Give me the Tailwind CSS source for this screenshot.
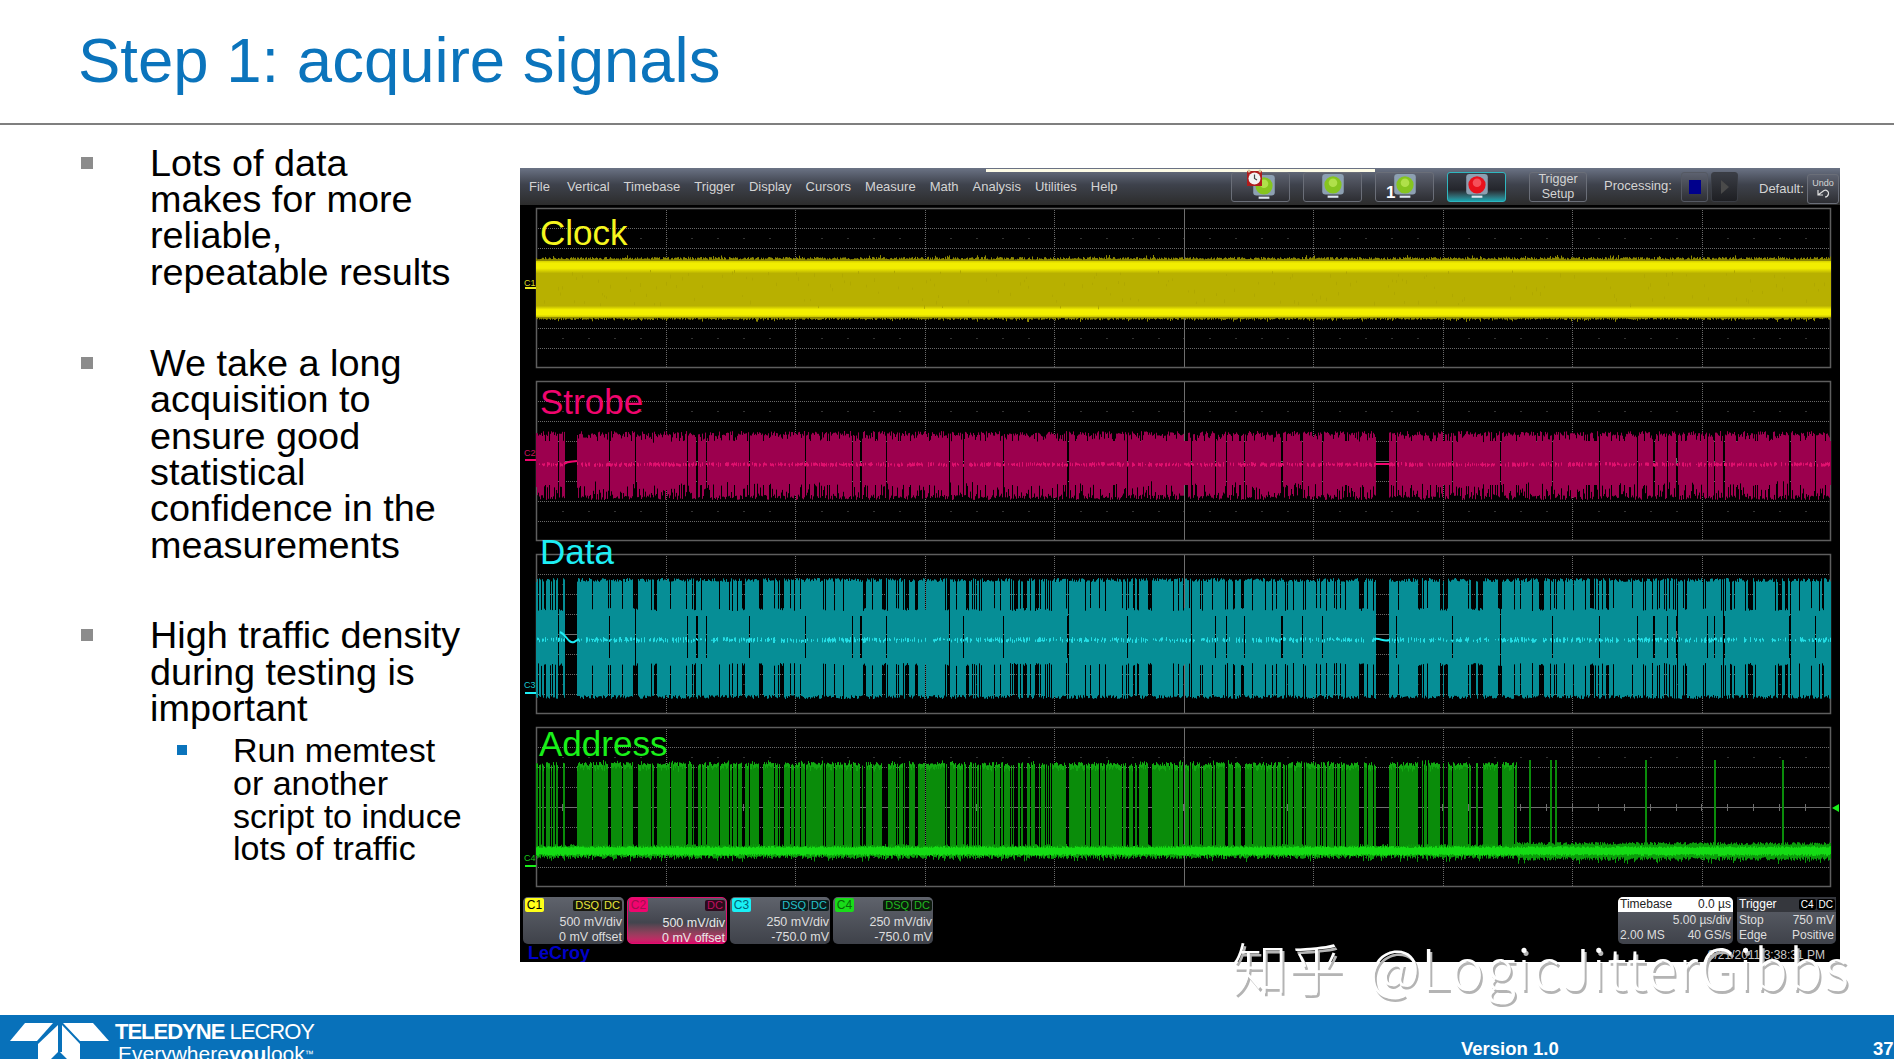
<!DOCTYPE html>
<html lang="en">
<head>
<meta charset="UTF-8">
<title>Step 1: acquire signals</title>
<script src="https://cdn.jsdelivr.net/npm/@tailwindcss/browser@4"></script>
</head>
<body class="bg-white font-['Liberation_Sans',Arial,sans-serif]">
<div class="relative flex flex-col w-[1894px] h-[1059px] overflow-hidden">

  <!-- Title -->
  <div class="h-[123px] pl-[78px] pt-[29px] shrink-0">
    <h1 class="text-[63.5px] leading-none text-[#0b74bc]">Step 1: acquire signals</h1>
  </div>
  <div class="h-[2px] bg-[#7f7f7f] shrink-0"></div>

  <div class="flex h-[890px] shrink-0">
    <!-- Bullets -->
    <div class="w-[520px] pl-[81px] pt-[20px] shrink-0 text-black">
      <div class="flex text-[37.8px] leading-[36.2px]">
        <span class="w-[12px] h-[12px] mt-[12px] mr-[57px] bg-[#8c8c8c] shrink-0"></span>
        <p>Lots of data<br>makes for more<br>reliable,<br>repeatable results</p>
      </div>
      <div class="flex text-[37.8px] leading-[36.4px] mt-[55px]">
        <span class="w-[12px] h-[12px] mt-[12px] mr-[57px] bg-[#8c8c8c] shrink-0"></span>
        <p>We take a long<br>acquisition to<br>ensure good<br>statistical<br>confidence in the<br>measurements</p>
      </div>
      <div class="flex text-[37.8px] leading-[36.4px] mt-[54px]">
        <span class="w-[12px] h-[12px] mt-[12px] mr-[57px] bg-[#8c8c8c] shrink-0"></span>
        <p>High traffic density<br>during testing is<br>important</p>
      </div>
      <div class="flex text-[34px] leading-[32.6px] mt-[8px] ml-[96px]">
        <span class="w-[10px] h-[10px] mt-[11px] mr-[46px] bg-[#0b74bc] shrink-0"></span>
        <p>Run memtest<br>or another<br>script to induce<br>lots of traffic</p>
      </div>
    </div>

    <!-- Scope capture -->
    <div class="relative w-[1320px] h-[794px] mt-[43px] bg-black shrink-0 overflow-hidden">
      <!-- Menu bar -->
      <div class="relative flex items-center h-[37px] bg-linear-to-b from-[#6b7385] via-[#3e424c] via-45% to-[#2c2c2c] text-[#d4d4d4]">
        <div class="absolute left-[466px] top-[1px] w-[389px] h-[3px] bg-[#fdfbe6]"></div>
        <nav class="flex gap-[14px] pl-[9px] text-[13px] w-[711px] shrink-0">
          <span class="mr-[3px]">File</span><span>Vertical</span><span>Timebase</span><span>Trigger</span><span>Display</span><span>Cursors</span><span>Measure</span><span>Math</span><span>Analysis</span><span>Utilities</span><span>Help</span>
        </nav>
        <div class="flex gap-[13px]">
          <div class="relative flex items-center justify-center w-[59px] h-[30px] rounded-[3px] border border-[#6a6e78] bg-linear-to-b from-[#5d6270] to-[#2d2e33]">
            <svg class="w-[26px] h-[28px] mt-[2px] ml-[6px]" viewBox="0 0 24 26"><rect x="2" y="1" width="20" height="19" rx="3" fill="#8da0b2"/><circle cx="12" cy="11" r="8" fill="#86c51f"/><circle cx="12" cy="9" r="4" fill="#b0e04a"/><rect x="7" y="21" width="10" height="2" fill="#dfe8f2"/></svg>
            <svg class="absolute left-[14px] -top-[4px] w-[17px] h-[19px]" viewBox="0 0 17 19"><rect x="1" y="2" width="15" height="15" fill="#b01d1d"/><circle cx="8.5" cy="9.5" r="6" fill="#f2f2f2"/><path d="M8.5 5.500V9.500L11 11" stroke="#444" stroke-width="1.2" fill="none"/><circle cx="3" cy="2" r="1.500" fill="#d8c9a0"/><circle cx="14" cy="2" r="1.500" fill="#d8c9a0"/></svg>
          </div>
          <div class="flex items-center justify-center w-[59px] h-[30px] rounded-[3px] border border-[#6a6e78] bg-linear-to-b from-[#5d6270] to-[#2d2e33]">
            <svg class="w-[26px] h-[28px]" viewBox="0 0 24 26"><rect x="2" y="1" width="20" height="19" rx="3" fill="#8da0b2"/><circle cx="12" cy="11" r="8" fill="#86c51f"/><circle cx="12" cy="9" r="4" fill="#b0e04a"/><rect x="7" y="21" width="10" height="2" fill="#dfe8f2"/></svg>
          </div>
          <div class="relative flex items-center justify-center w-[59px] h-[30px] rounded-[3px] border border-[#6a6e78] bg-linear-to-b from-[#5d6270] to-[#2d2e33]">
            <span class="absolute left-[10px] bottom-[0px] text-[17px] leading-none font-bold text-white">1</span>
            <svg class="w-[26px] h-[28px]" viewBox="0 0 24 26"><rect x="2" y="1" width="20" height="19" rx="3" fill="#8da0b2"/><circle cx="12" cy="11" r="8" fill="#86c51f"/><circle cx="12" cy="9" r="4" fill="#b0e04a"/><rect x="7" y="21" width="10" height="2" fill="#dfe8f2"/></svg>
          </div>
          <div class="flex items-center justify-center w-[59px] h-[30px] rounded-[3px] border border-[#2fb7c0] bg-linear-to-b from-[#3a3e48] via-[#24262c] via-60% to-[#16a3ae]">
            <svg class="w-[26px] h-[28px]" viewBox="0 0 24 26"><rect x="2" y="1" width="20" height="19" rx="3" fill="#8da0b2"/><circle cx="12" cy="11" r="8" fill="#e8111c"/><circle cx="12" cy="9" r="4" fill="#f5505a"/><rect x="7" y="21" width="10" height="2" fill="#dfe8f2"/></svg>
          </div>
        </div>
        <div class="flex items-center justify-center w-[58px] h-[30px] ml-[23px] rounded-[3px] border border-[#6a6e78] bg-linear-to-b from-[#5d6270] to-[#2d2e33] text-[12.5px] leading-[15px] text-center">Trigger<br>Setup</div>
        <span class="ml-[17px] w-[69px] text-[13px] mb-[2px] whitespace-nowrap">Processing:</span>
        <div class="flex items-center justify-center w-[27px] h-[30px] ml-[8px] rounded-[3px] border border-[#555963] bg-linear-to-b from-[#5d6270] to-[#2d2e33]"><div class="w-[12px] h-[14px] bg-[#00008c]"></div></div>
        <div class="flex items-center justify-center w-[27px] h-[30px] ml-[3px] rounded-[3px] border border-[#3a3d44] bg-linear-to-b from-[#3b3e46] to-[#1e1f23]">
          <svg class="w-[10px] h-[14px]" viewBox="0 0 10 14"><path d="M1 0L9 7L1 14Z" fill="#4a4a4a"/></svg>
        </div>
        <span class="ml-[21px] text-[13px] mt-[5px] w-[46px] whitespace-nowrap">Default:</span>
        <div class="flex flex-col items-center w-[32px] h-[30px] ml-[2px] mt-[5px] rounded-[3px] border border-[#6a6e78] bg-linear-to-b from-[#5d6270] to-[#2d2e33] text-[9px] leading-[12px] pt-[2px]">Undo
          <svg class="w-[14px] h-[9px]" viewBox="0 0 14 9"><path d="M2 1V6H7M2 6L8 1.500C10.500 0.500 13 2.500 12.500 5C12 7 10.500 8 9 8" stroke="#e0e0e0" stroke-width="1.2" fill="none"/></svg>
        </div>
      </div>

      <!-- Plots -->
      <div class="flex flex-col gap-[13px] pl-[16px] pt-[3px]">
        <div class="relative w-[1295px] h-[160px]">
          <svg id="plot1" class="block overflow-visible" width="1295" height="160"></svg>
          <span class="absolute left-[4px] top-[7px] text-[35px] leading-none text-[#f5f51e]">Clock</span>
          <span class="absolute -left-[12px] top-[71px] text-[9px] leading-none text-[#d8d820]">C1</span>
          <div class="absolute -left-[11px] top-[79px] w-[11px] h-[2px] bg-[#e8e820]"></div>
        </div>
        <div class="relative w-[1295px] h-[160px]">
          <svg id="plot2" class="block overflow-visible" width="1295" height="160"></svg>
          <span class="absolute left-[4px] top-[3px] text-[35px] leading-none text-[#f0056e]">Strobe</span>
          <span class="absolute -left-[12px] top-[68px] text-[9px] leading-none text-[#d01060]">C2</span>
          <div class="absolute -left-[11px] top-[78px] w-[11px] h-[2px] bg-[#f0056e]"></div>
        </div>
        <div class="relative w-[1295px] h-[160px]">
          <svg id="plot3" class="block overflow-visible" width="1295" height="160"></svg>
          <span class="absolute left-[4px] -top-[20px] text-[35px] leading-none text-[#1eeef5]">Data</span>
          <span class="absolute -left-[12px] top-[127px] text-[9px] leading-none text-[#19c8d0]">C3</span>
          <div class="absolute -left-[11px] top-[138px] w-[11px] h-[2px] bg-[#1eeef5]"></div>
        </div>
        <div class="relative w-[1295px] h-[160px]">
          <svg id="plot4" class="block overflow-visible" width="1295" height="160"></svg>
          <span class="absolute left-[3px] -top-[1px] text-[35px] leading-none text-[#19f019]">Address</span>
          <span class="absolute -left-[12px] top-[127px] text-[9px] leading-none text-[#19c819]">C4</span>
          <div class="absolute -left-[11px] top-[138px] w-[11px] h-[2px] bg-[#19f019]"></div>
        </div>
      </div>

      <!-- Channel and timebase readouts -->
      <div class="flex mt-[10px] pl-[3px] pr-[4px]">
        <div class="w-[101px] h-[47px] rounded-[5px] bg-linear-to-b from-[#5f636c] to-[#3f424a] text-[#dedede] text-[12.5px] leading-[15px] text-right pr-[2px]">
          <div class="flex items-start justify-between h-[18px] pt-[1px] pl-[2px]"><span class="w-[19px] h-[14px] rounded-[2px] bg-[#ffff19] text-black text-[12px] leading-[14px] text-center">C1</span><span class="flex gap-[1px] text-[11px] leading-[11px] mt-[2px]"><span class="px-[2px] rounded-[2px] bg-[#15150c] text-[#e5e53c]">DSQ</span><span class="px-[2px] rounded-[2px] bg-[#15150c] text-[#e5e53c]">DC</span></span></div>
          <div>500 mV/div</div><div>0 mV offset</div>
        </div>
        <div class="w-[100px] h-[47px] ml-[3px] rounded-[5px] border border-[#e0106f] bg-linear-to-b from-[#5a5e68] via-[#43454e] via-55% to-[#d9046a] text-[#e8e8e8] text-[12.5px] leading-[15px] text-right pr-[1px]">
          <div class="flex items-start justify-between h-[18px] pl-[1px]"><span class="w-[19px] h-[14px] rounded-[2px] bg-[#f0056e] text-[#a0104e] text-[12px] leading-[14px] text-center">C2</span><span class="text-[11px] leading-[11px] mt-[2px] px-[2px] rounded-[2px] bg-[#2c0a1c] text-[#c01060]">DC</span></div>
          <div>500 mV/div</div><div>0 mV offset</div>
        </div>
        <div class="w-[100px] h-[47px] ml-[3px] rounded-[5px] bg-linear-to-b from-[#5f636c] to-[#3f424a] text-[#dedede] text-[12.5px] leading-[15px] text-right pr-[1px]">
          <div class="flex items-start justify-between h-[18px] pt-[1px] pl-[2px]"><span class="w-[19px] h-[14px] rounded-[2px] bg-[#19f0f5] text-[#067] text-[12px] leading-[14px] text-center">C3</span><span class="flex gap-[1px] text-[11px] leading-[11px] mt-[2px]"><span class="px-[2px] rounded-[2px] bg-[#0b1a1c] text-[#26c0c8]">DSQ</span><span class="px-[2px] rounded-[2px] bg-[#0b1a1c] text-[#26c0c8]">DC</span></span></div>
          <div>250 mV/div</div><div>-750.0 mV</div>
        </div>
        <div class="w-[100px] h-[47px] ml-[3px] rounded-[5px] bg-linear-to-b from-[#5f636c] to-[#3f424a] text-[#dedede] text-[12.5px] leading-[15px] text-right pr-[1px]">
          <div class="flex items-start justify-between h-[18px] pt-[1px] pl-[2px]"><span class="w-[19px] h-[14px] rounded-[2px] bg-[#19dc19] text-[#076a07] text-[12px] leading-[14px] text-center">C4</span><span class="flex gap-[1px] text-[11px] leading-[11px] mt-[2px]"><span class="px-[2px] rounded-[2px] bg-[#0c1a0c] text-[#20b820]">DSQ</span><span class="px-[2px] rounded-[2px] bg-[#0c1a0c] text-[#20b820]">DC</span></span></div>
          <div>250 mV/div</div><div>-750.0 mV</div>
        </div>

        <div class="w-[115px] h-[47px] ml-auto rounded-[5px] overflow-hidden bg-linear-to-b from-[#5f636c] to-[#3f424a] text-[#dedede] text-[12px] leading-[15px]">
          <div class="flex justify-between h-[15px] px-[2px] bg-white text-[#222]"><span>Timebase</span><span>0.0 µs</span></div>
          <div class="text-right pr-[2px] mt-[1px]">5.00 µs/div</div>
          <div class="flex justify-between px-[2px]"><span>2.00 MS</span><span>40 GS/s</span></div>
        </div>
        <div class="w-[99px] h-[47px] ml-[4px] rounded-[5px] bg-linear-to-b from-[#5f636c] to-[#3f424a] text-[#dedede] text-[12px] leading-[15px]">
          <div class="flex justify-between items-center h-[15px] pl-[2px] pr-[1px] bg-[#35373d] text-white"><span>Trigger</span><span class="flex gap-[1px] text-[10px] leading-[11px]"><span class="px-[2px] rounded-[2px] bg-black">C4</span><span class="px-[2px] rounded-[2px] bg-black">DC</span></span></div>
          <div class="flex justify-between px-[2px] mt-[1px]"><span>Stop</span><span>750 mV</span></div>
          <div class="flex justify-between px-[2px]"><span>Edge</span><span>Positive</span></div>
        </div>
      </div>
      <div class="flex justify-between h-[18px] pl-[8px] pr-[15px]">
        <span class="text-[18px] leading-[18px] font-bold text-[#0000c8]">LeCroy</span>
        <span class="text-[12px] leading-[22px] text-[#c8c8c8]">8/21/2011 3:38:31 PM</span>
      </div>
    </div>
  </div>

  <!-- Footer -->
  <footer class="relative flex h-[44px] bg-[#0871ba] shrink-0 overflow-hidden text-white">
    <svg class="absolute left-0 top-0" width="112" height="44" viewBox="0 15 112 44">
      <path d="M25 23H53L37 41H10Z" fill="#fff"/>
      <path d="M63 23H93L109 41H80Z" fill="#fff"/>
      <path d="M58 25V52L50 60H38V44Z" fill="#fff"/>
      <path d="M62 25L80 44V60H68L60 52H62Z" fill="#fff"/>
    </svg>
    <div class="ml-[115px] pt-[5px] w-[300px] shrink-0">
      <div class="text-[22px] leading-[24px] tracking-[-1px] whitespace-nowrap"><b>TELEDYNE</b> LECROY</div>
      <div class="text-[21px] leading-[24px] ml-[3px] -mt-[2px] whitespace-nowrap">Everywhere<b>you</b>look<sup class="text-[9px]">™</sup></div>
    </div>
    <span class="absolute left-[1461px] top-[23px] text-[18.5px] leading-[22px] font-bold whitespace-nowrap">Version 1.0</span>
    <span class="absolute left-[1873px] top-[23px] text-[18.5px] leading-[22px] font-bold">37</span>
  </footer>

  <!-- Watermark -->
  <div class="absolute left-[1232px] top-[928px] flex items-baseline gap-[25px] text-[56px] leading-[76px] font-light text-white whitespace-nowrap [text-shadow:2px_3px_0_#b4b4b4] font-['Noto_Sans_CJK_SC','Noto_Sans',sans-serif]">
    <span>知乎</span><span class="tracking-[1.15px]">@LogicJitterGibbs</span>
  </div>
</div>

<script>
// small seeded generator so the traces come out the same every load
let seed = 20110821;
function rnd() {
  seed = (seed * 1664525 + 1013904223) >>> 0;
  return seed / 4294967296;
}

const W = 1295, H = 160, DIVX = W / 10, DIVY = H / 8;

function dead(x) { return (x > 28 && x < 41) || (x > 839 && x < 853); }

// shared burst pattern, every channel sees the same bus traffic
const active = [], dense = [], thin = [];
for (let x = 0; x < W;) {
  const on = 2 + Math.floor(rnd() * rnd() * 34);
  const off = 1 + Math.floor(rnd() * rnd() * 5);
  for (let i = 0; i < on; i++) active[x++] = true;
  for (let i = 0; i < off; i++) active[x++] = false;
}
for (let x = 0; x < W;) {
  const on = 6 + Math.floor(rnd() * 60);
  const off = rnd() < 0.7 ? 1 : 2;
  for (let i = 0; i < on; i++) dense[x++] = true;
  for (let i = 0; i < off; i++) dense[x++] = false;
}
for (let x = 0; x < W;) {
  const on = 1 + Math.floor(rnd() * rnd() * 22);
  const off = rnd() < 0.8 ? 1 : 2 + Math.floor(rnd() * 4);
  for (let i = 0; i < on; i++) thin[x++] = true;
  for (let i = 0; i < off; i++) thin[x++] = false;
}

function line(x, a, b) { return `M${x + 0.5} ${a.toFixed(1)}V${b.toFixed(1)}`; }
function stroke(d, color, w, extra) {
  return `<path d="${d}" stroke="${color}" stroke-width="${w || 1}" fill="none" ${extra || ''}/>`;
}

function grid(color, triX) {
  let s = '';
  for (let i = 1; i < 8; i++) {
    const y = Math.round(i * DIVY) + 0.5;
    if (i === 4) continue;
    s += `<line x1="0" x2="${W}" y1="${y}" y2="${y}" stroke="#6a6a6a" stroke-dasharray="1 1"/>`;
  }
  for (let i = 1; i < 10; i++) {
    const x = Math.round(i * DIVX) + 0.5;
    if (i === 5) continue;
    s += `<line x1="${x}" x2="${x}" y1="0" y2="${H}" stroke="#6a6a6a" stroke-dasharray="1 1"/>`;
  }
  s += `<line x1="0" x2="${W}" y1="80.5" y2="80.5" stroke="#6e6e6e"/>`;
  s += `<line x1="${Math.round(5 * DIVX) + 0.5}" x2="${Math.round(5 * DIVX) + 0.5}" y1="0" y2="${H}" stroke="#6e6e6e"/>`;
  for (let x = DIVX / 5; x < W; x += DIVX / 5) {
    const tx = Math.round(x) + 0.5;
    s += `<line x1="${tx}" x2="${tx}" y1="77" y2="84" stroke="#6e6e6e"/>`;
    s += `<rect x="${tx}" y="30" width="1" height="1" fill="#666"/><rect x="${tx}" y="130" width="1" height="1" fill="#666"/>`;
  }
  s += `<rect x="0.5" y="0.5" width="${W - 1}" height="${H - 1}" fill="none" stroke="#5e5e5e" stroke-width="1.5"/>`;
  const tc = 648.5;
  s += `<polygon points="${tc - 4},168 ${tc + 4},168 ${tc},161" fill="${triX}"/>`;
  return s;
}

function clock() {
  let dim = '', body = '';
  for (let x = 0; x < W; x++) {
    dim += line(x, 51.5 - rnd() * 2.5 - (rnd() < 0.06 ? 2 : 0), 56) + line(x, 107, 110 + rnd() * 2 + (rnd() < 0.06 ? 2 : 0));
    if (x % 2 === 0 && rnd() < 0.3) {
      const y = 62 + rnd() * 36;
      body += line(x, y, y + 2 + rnd() * 2);
    }
  }
  let s = stroke(dim, '#8f8a00');
  s += `<rect x="0" y="53" width="${W}" height="56" fill="url(#yb)"/>`;
  s += stroke(body, '#b0a800');
  return s;
}

function strobe() {
  let d = '', hi = '';
  for (let x = 0; x < W; x++) {
    if (dead(x)) continue;
    const top = 50 + rnd() * 5 + (rnd() < 0.3 ? rnd() * 7 : 0);
    const bot = 119 - rnd() * 5 - (rnd() < 0.4 ? rnd() * 14 : 0);
    if (dense[x]) {
      if (active[x] || rnd() < 0.6) d += line(x, top, bot);
      else d += line(x, 60, 104);
    }
    if (rnd() < 0.55) hi += line(x, 81 + rnd() * 2, 84 + rnd() * 2);
  }
  let s = stroke(d, '#9c004e');
  s += stroke(hi, '#e0106e');
  s += `<path d="M28 83C32 80 36 81 41 80" stroke="#f0056e" stroke-width="2" fill="none"/>`;
  s += `<path d="M839 83H853" stroke="#f0056e" stroke-width="2" fill="none"/>`;
  return s;
}

function data() {
  let d = '', hi = '';
  for (let x = 0; x < W; x++) {
    if (dead(x)) continue;
    if (dense[x]) d += line(x, 54 + rnd() * 3, 112 - rnd() * 3);
    if (thin[x]) {
      d += line(x, 24 + rnd() * 4, 62) + line(x, 104, 145 - rnd() * 4);
    }
    if (rnd() < 0.55) hi += line(x, 83 + rnd() * 3, 86 + rnd() * 3);
  }
  let s = stroke(d, '#068e96');
  s += stroke(hi, '#24dde5');
  s += `<path d="M24 78C31 81 32 90 38 88C40 87 41 86 43 85" stroke="#1eeef5" stroke-width="2" fill="none"/>`;
  s += `<path d="M839 85C844 84 848 88 853 86" stroke="#1eeef5" stroke-width="2" fill="none"/>`;
  return s;
}

function address() {
  const end = 981;
  let d = '', top = '', band = '', hi = '';
  for (let x = 0; x < W; x++) {
    if (x < end && !dead(x) && thin[x] && dense[x]) {
      const t = 35 + rnd() * 4 - (rnd() < 0.1 ? 2 : 0);
      d += line(x, t, 122);
      top += line(x, t, t + 3 + rnd() * 3);
    }
    const t = x < end ? 4 : 6;
    band += line(x, 124 - t - rnd() * 3, 124 + t + rnd() * 4 + (rnd() < 0.1 ? 3 : 0));
    hi += line(x, 121 - rnd() * 2, 127 + rnd() * 2);
  }
  for (const x of [993, 1014, 1019, 1109, 1178, 1246]) {
    d += line(x, 33, 120);
    d += line(x + 1, 33, 120);
  }
  let s = stroke(d, '#0a8c0a');
  s += stroke(top, '#12a812');
  s += stroke(band, '#0b9a0b');
  s += stroke(hi, '#14dc14');
  return s;
}

const defs = `<defs><linearGradient id="yb" x1="0" y1="0" x2="0" y2="1">
  <stop offset="0" stop-color="#d6d000"/><stop offset="0.04" stop-color="#f2ee00"/>
  <stop offset="0.13" stop-color="#f2ee00"/><stop offset="0.22" stop-color="#b8b000"/>
  <stop offset="0.8" stop-color="#b8b000"/><stop offset="0.87" stop-color="#f4f000"/>
  <stop offset="0.96" stop-color="#f4f000"/><stop offset="1" stop-color="#c8c400"/>
</linearGradient></defs>`;

document.getElementById('plot1').innerHTML = defs + grid('#f5f51e') + clock();
document.getElementById('plot2').innerHTML = grid('#f0056e') + strobe();
document.getElementById('plot3').innerHTML = grid('#1eeef5') + data();
document.getElementById('plot4').innerHTML = grid('#19f019') + address()
  + `<polygon points="1303,77 1296,81 1303,85" fill="#19f019"/>`;
</script>
</body>
</html>
